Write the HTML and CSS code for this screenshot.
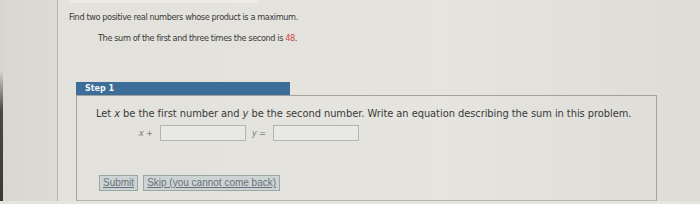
FILE: index.html
```html
<!DOCTYPE html>
<html lang="en">
<head>
  <meta charset="UTF-8" />
  <title>Step 1</title>
  <link rel="stylesheet" href="styles.css">
</head>
<body>
  <div class="page">
    <div class="edge"></div>
    <div class="sidebar"></div>
    <main class="content">
      <div class="top-strip"></div>
      <p class="question">Find two positive real numbers whose product is a maximum.</p>
      <p class="given">The sum of the first and three times the second is <span class="num">48</span>.</p>

      <section class="step">
        <div class="step-tab">Step 1</div>
        <div class="step-box">
          <p class="prompt">Let <i>x</i> be the first number and <i>y</i> be the second number. Write an equation describing the sum in this problem.</p>
          <div class="answer-row">
            <span class="label"><i>x</i> +</span>
            <span class="field"></span>
            <span class="label"><i>y</i> =</span>
            <span class="field"></span>
          </div>
          <div class="buttons">
            <span class="btn">Submit</span>
            <span class="btn">Skip (you cannot come back)</span>
          </div>
        </div>
      </section>
    </main>
  </div>
</body>
</html>
```

FILE: styles.css
```css
* {
  box-sizing: border-box;
}

body {
  margin: 0;
  background: #e6e5e1;
  font-family: "DejaVu Sans", Verdana, sans-serif;
  color: #3a3a3a;
  overflow: hidden;
}

.page {
  display: flex;
  height: 201px;
}

.edge {
  width: 3px;
  background: linear-gradient(180deg, #d6d5cf 0, #d6d5cf 35%, #4a4846 55%, #3a3836 100%);
}

.sidebar {
  width: 55px;
  background: linear-gradient(90deg, #d8d7d1, #dcdbd5);
  border-right: 1px solid #b3b2ac;
}

.content {
  flex: 1;
  background: linear-gradient(90deg, #e2e1db 0, #e5e4de 60%, #dedcd6 100%);
  padding-left: 11px;
}

.top-strip {
  height: 3px;
  width: 190px;
  background: #ecebe7;
}

.question {
  margin: 9px 0 0;
  font-size: 8.2px;
  line-height: 10px;
  letter-spacing: -0.4px;
  white-space: nowrap;
}

.given {
  margin: 11px 0 0 29px;
  font-size: 8.2px;
  line-height: 10px;
  letter-spacing: -0.4px;
  white-space: nowrap;
}

.num {
  color: #d9443f;
}

.step {
  margin: 39px 0 0 7px;
  width: 581px;
}

.step-tab {
  width: 214px;
  height: 13px;
  background: #3d6d99;
  color: #f4f6f8;
  font-weight: bold;
  font-size: 8px;
  line-height: 13px;
  padding-left: 9px;
}

.step-box {
  border: 1px solid #a2a19c;
  border-bottom-color: #b4b3ae;
  height: 106px;
  padding: 12px 0 0 19px;
}

.prompt {
  margin: 0;
  font-size: 9.9px;
  line-height: 11px;
  letter-spacing: -0.05px;
  white-space: nowrap;
}

.answer-row {
  display: flex;
  align-items: center;
  margin: 6px 0 0 43px;
  font-size: 8px;
  color: #7a7a78;
}

.label {
  margin-right: 7px;
}

.field {
  width: 86px;
  height: 16px;
  background: #e8e8e4;
  border: 1px solid #b4b4b0;
  margin-right: 6px;
}

.buttons {
  display: flex;
  gap: 5px;
  margin: 34px 0 0 3px;
}

.btn {
  font-family: "Liberation Sans", Arial, sans-serif;
  font-size: 10px;
  line-height: 14px;
  color: #67707a;
  text-decoration: underline;
  background: #cdd5d4;
  border: 1px solid #9aa6a6;
  padding: 0 3px;
}
```
